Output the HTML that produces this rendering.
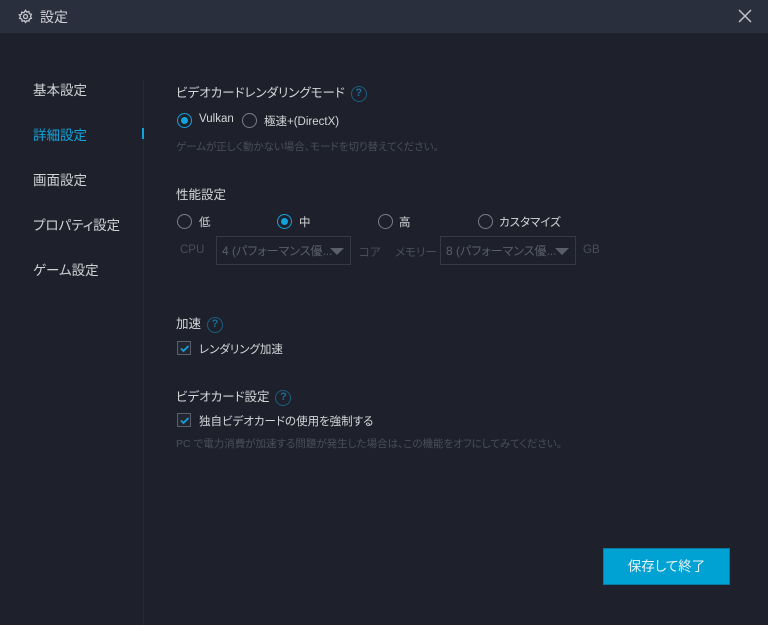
<!DOCTYPE html>
<html><head><meta charset="utf-8"><style>
*{margin:0;padding:0;box-sizing:border-box}
body{width:768px;height:625px;background:#1e212b;font-family:"Liberation Sans","Noto Sans CJK JP",sans-serif;color:#d4d6da;position:relative;overflow:hidden;font-size:13px;font-feature-settings:"palt"}
.t{position:absolute;white-space:nowrap}
.bar{position:absolute;left:0;top:0;width:768px;height:33px;background:#2a2f3e}
.side{font-size:13.5px;color:#d0d2d6}
.div{position:absolute;left:143px;top:80px;width:1px;height:545px;background:#262a35}
.ind{position:absolute;left:142px;top:128px;width:2px;height:11px;background:#12a3dc}
.h{font-size:12.5px;color:#d4d6da}
.q{display:inline-block;width:16px;height:16px;border:1.5px solid #1b5e80;border-radius:50%;color:#1b6e96;font-size:11px;text-align:center;line-height:13px;vertical-align:middle;margin-left:6px;font-weight:bold}
.r{position:absolute;width:15px;height:15px;border:1.3px solid #7a7e88;border-radius:50%}
.r.on{border-color:#12a3dc}
.r.on::after{content:"";position:absolute;left:2.5px;top:2.5px;width:7.5px;height:7.5px;border-radius:50%;background:#12a3dc}
.lab{font-size:11.5px;color:#d4d6da}
.dim{font-size:10.5px;color:#4a4e58}
.sel{position:absolute;height:29px;border:1px solid #363a45;color:#5a5e68;font-size:12px;padding:5px 0 0 5px;white-space:nowrap;overflow:hidden}
.sel::after{content:"";position:absolute;right:6px;top:11px;border-left:7px solid transparent;border-right:7px solid transparent;border-top:7px solid #5a5e68}
.cb{position:absolute;width:14px;height:14px;border:1px solid #5a5e68;background:#232733}
.cb svg{position:absolute;left:1px;top:1px}
.btn{position:absolute;left:603px;top:548px;width:127px;height:37px;background:#00a2d4;border:1px solid #0a7ba3;color:#e8f4fa;font-size:13.5px;text-align:center;line-height:35px}
</style></head><body>
<div class="bar"></div>
<svg class="t" style="left:18px;top:9px" width="15" height="15" viewBox="0 0 24 24" fill="none" stroke="#c8cad0" stroke-width="2"><circle cx="12" cy="12" r="3.2"/><path d="M12 2l2 3 3.5-1 .5 3.5 3.5 1-1.5 3.5 1.5 3-3.5 1-.5 3.5-3.5-1-2 3-2-3-3.5 1-.5-3.5-3.5-1 1.5-3.5L2 9.5l3.5-1L6 5l3.5 1z"/></svg>
<div class="t" style="left:40px;top:7px;font-size:14px;color:#d0d2d6">設定</div>
<svg class="t" style="left:738px;top:9px" width="14" height="14" viewBox="0 0 14 14" stroke="#c0c2c8" stroke-width="1.5"><path d="M1 1L13 13M13 1L1 13"/></svg>

<div class="t side" style="left:33px;top:79px">基本設定</div>
<div class="t side" style="left:33px;top:124px;color:#12a3dc">詳細設定</div>
<div class="t side" style="left:33px;top:169px">画面設定</div>
<div class="t side" style="left:33px;top:214px">プロパティ設定</div>
<div class="t side" style="left:33px;top:259px">ゲーム設定</div>
<div class="div"></div><div class="ind"></div>

<div class="t h" style="left:176px;top:82px">ビデオカードレンダリングモード<span class="q">?</span></div>
<div class="r on" style="left:177px;top:113px"></div>
<div class="t lab" style="left:199px;top:113px">Vulkan</div>
<div class="r" style="left:242px;top:113px"></div>
<div class="t lab" style="left:264px;top:113px">極速+(DirectX)</div>
<div class="t dim" style="left:176px;top:139px">ゲームが正しく動かない場合、モードを切り替えてください。</div>

<div class="t h" style="left:176px;top:184px">性能設定</div>
<div class="r" style="left:177px;top:214px"></div><div class="t lab" style="left:199px;top:214px">低</div>
<div class="r on" style="left:277px;top:214px"></div><div class="t lab" style="left:299px;top:214px">中</div>
<div class="r" style="left:378px;top:214px"></div><div class="t lab" style="left:399px;top:214px">高</div>
<div class="r" style="left:478px;top:214px"></div><div class="t lab" style="left:499px;top:214px">カスタマイズ</div>
<div class="t dim" style="left:180px;top:244px;font-size:11.5px">CPU</div>
<div class="sel" style="left:216px;top:236px;width:135px">4 (パフォーマンス優...</div>
<div class="t dim" style="left:359px;top:244px;font-size:11.5px">コア</div>
<div class="t dim" style="left:395px;top:244px;font-size:11.5px">メモリー</div>
<div class="sel" style="left:440px;top:236px;width:136px">8 (パフォーマンス優...</div>
<div class="t dim" style="left:583px;top:244px;font-size:11.5px">GB</div>

<div class="t h" style="left:176px;top:313px">加速<span class="q">?</span></div>
<div class="cb" style="left:177px;top:341px"><svg width="11" height="11" viewBox="0 0 11 11"><path d="M2 5.5l2.5 2.5L9.5 3" stroke="#12a3dc" stroke-width="1.8" fill="none"/></svg></div>
<div class="t lab" style="left:199px;top:341px">レンダリング加速</div>

<div class="t h" style="left:176px;top:386px">ビデオカード設定<span class="q">?</span></div>
<div class="cb" style="left:177px;top:413px"><svg width="11" height="11" viewBox="0 0 11 11"><path d="M2 5.5l2.5 2.5L9.5 3" stroke="#12a3dc" stroke-width="1.8" fill="none"/></svg></div>
<div class="t lab" style="left:199px;top:413px">独自ビデオカードの使用を強制する</div>
<div class="t dim" style="left:176px;top:436px">PC で電力消費が加速する問題が発生した場合は、この機能をオフにしてみてください。</div>

<div class="btn">保存して終了</div>
</body></html>
